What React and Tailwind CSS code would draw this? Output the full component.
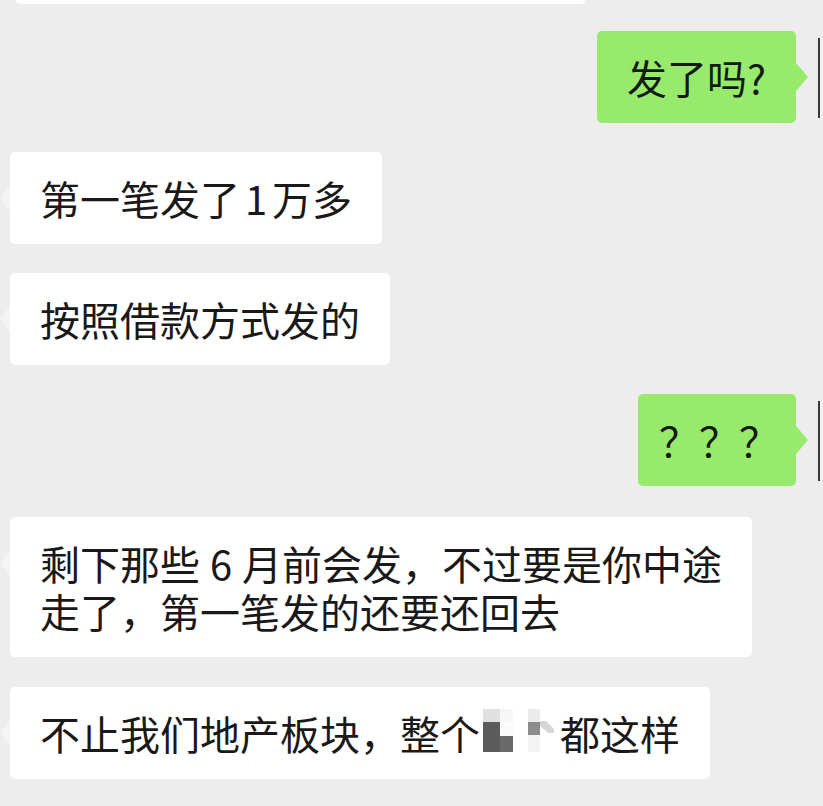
import React from "react";

const font = { fontFamily: '"Noto Sans CJK SC", "Noto Sans", sans-serif' };

function LeftBubble({ children, className = "" }) {
  return (
    <div className={"flex items-start " + className}>
      <div className="relative ml-[10px] rounded-[5px] bg-white px-[30px] py-[22px] text-[40px] leading-[48px] text-[#191919] whitespace-nowrap">
        <div className="absolute left-[-10px] top-[33px] h-0 w-0 border-y-[13px] border-r-[10px] border-y-transparent border-r-[#f4f4f4]" />
        {children}
      </div>
    </div>
  );
}

function RightBubble({ children, className = "", padClass = "px-[30px]" }) {
  return (
    <div className={"flex items-start justify-end " + className}>
      <div
        className={
          "relative rounded-[5px] bg-[#97ea6c] py-[22px] text-[40px] leading-[48px] text-[#141a10] whitespace-nowrap " +
          padClass
        }
      >
        {children}
        <div className="absolute right-[-12px] top-[32px] h-0 w-0 border-y-[14px] border-l-[12px] border-y-transparent border-l-[#97ea6c]" />
      </div>
      <div className="ml-[22px] mt-[7px] h-[80px] w-[5px] shrink-0 border-l-2 border-[#3a3a3a] bg-[#f3f3f3]" />
    </div>
  );
}

function Mosaic() {
  return (
    <svg width="80" height="48" viewBox="0 0 80 48" className="inline-block align-top">
      <rect x="3" y="0" width="17" height="13" fill="#e0e0e0" />
      <rect x="20" y="0" width="13" height="13" fill="#f7f7f7" />
      <rect x="3" y="13" width="17" height="30" fill="#5b5b5b" />
      <rect x="20" y="13" width="13" height="14" fill="#fbfbfb" />
      <rect x="20" y="27" width="13" height="16" fill="#6a6a6a" />
      <rect x="48" y="0" width="12" height="13" fill="#ebebeb" />
      <rect x="48" y="13" width="12" height="13" fill="#8c8c8c" />
      <rect x="48" y="26" width="12" height="17" fill="#f3f3f3" />
      <polygon points="60,12 66,12 74,20 74,24 68,24 60,17" fill="#d6d6d6" />
    </svg>
  );
}

export default function App() {
  return (
    <div
      className="flex h-[806px] w-[823px] flex-col overflow-hidden bg-[#ededed]"
      style={font}
    >
      <div className="ml-[16px] h-[4px] w-[569px] shrink-0 rounded-b-[5px] bg-white" />

      <RightBubble className="mt-[27px]">发了吗?</RightBubble>

      <LeftBubble className="mt-[29px]">
        第一笔发了<span className="inline-block w-[32px] text-center">1</span>万多
      </LeftBubble>

      <LeftBubble className="mt-[29px]">按照借款方式发的</LeftBubble>

      <RightBubble className="mt-[29px]" padClass="pl-[21px] pr-[17px]">
        ？？？
      </RightBubble>

      <LeftBubble className="mt-[31px]">
        剩下那些<span className="inline-block w-[42px] text-center">6</span>月前会发，不过要是你中途
        <br />
        走了，第一笔发的还要还回去
      </LeftBubble>

      <LeftBubble className="mt-[30px]">
        不止我们地产板块，整个<Mosaic />都这样
      </LeftBubble>
    </div>
  );
}
